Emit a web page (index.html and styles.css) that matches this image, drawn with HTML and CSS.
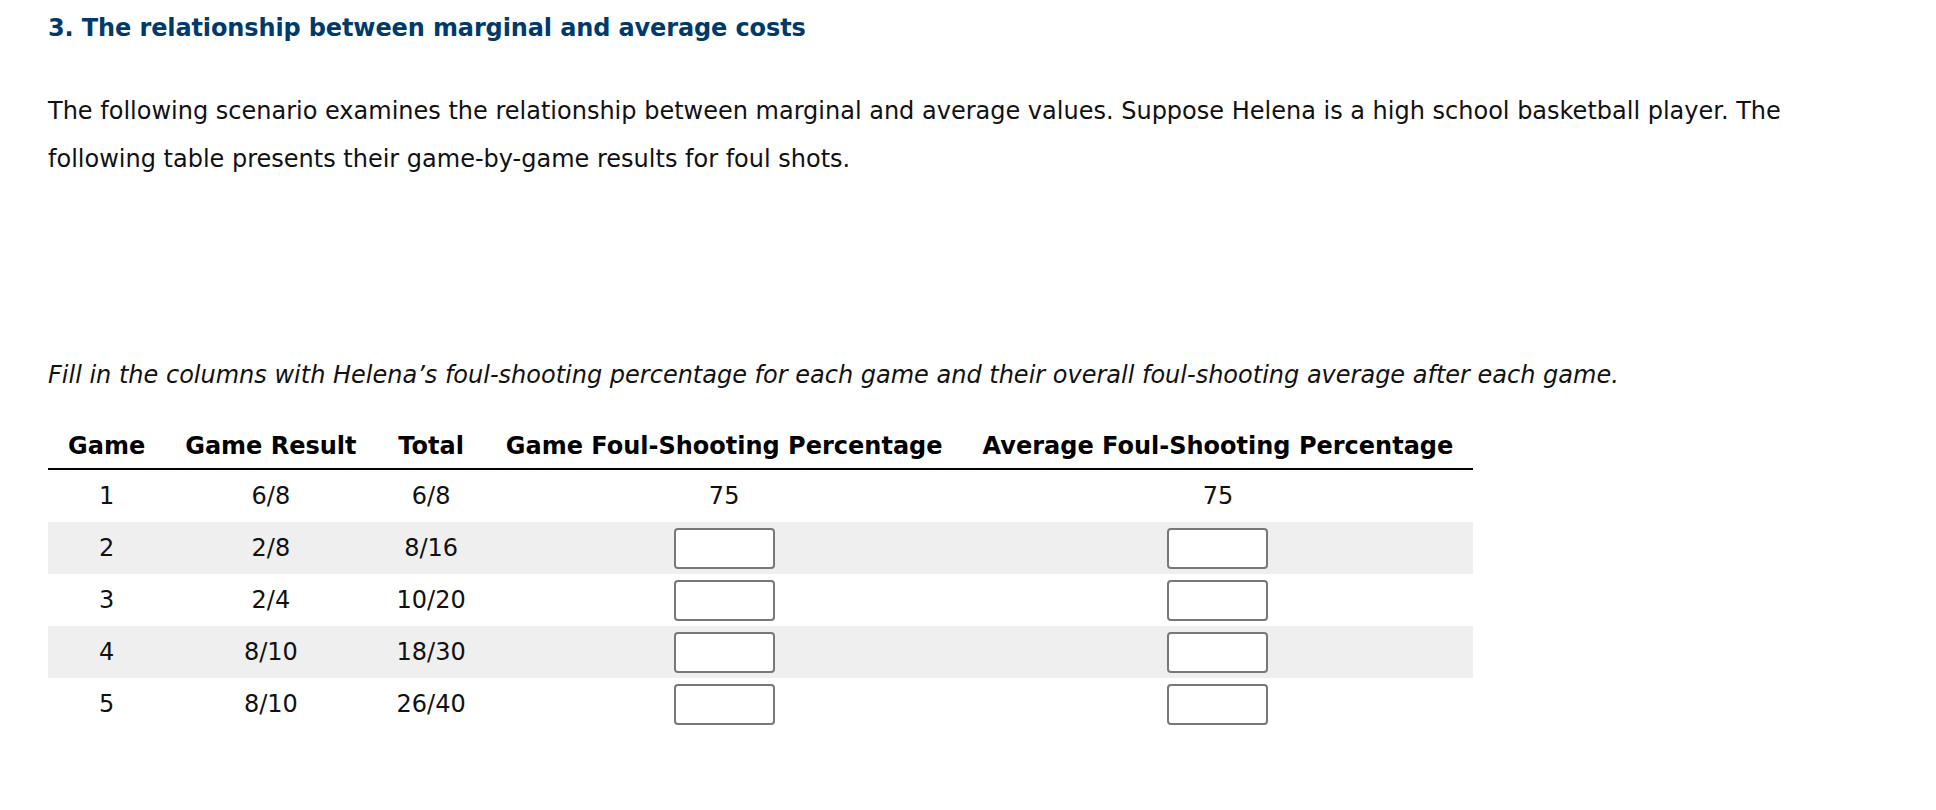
FILE: index.html
```html
<!DOCTYPE html>
<html>
<head>
<meta charset="utf-8">
<link rel="stylesheet" href="styles.css">
</head>
<body>
<div class="page">
  <h2 class="title">3. The relationship between marginal and average costs</h2>
  <p class="intro">The following scenario examines the relationship between marginal and average values. Suppose Helena is a high school basketball player. The following table presents their game-by-game results for foul shots.</p>
  <p class="instr">Fill in the columns with Helena’s foul-shooting percentage for each game and their overall foul-shooting average after each game.</p>
  <table class="results">
    <thead>
      <tr><th>Game</th><th>Game Result</th><th>Total</th><th>Game Foul-Shooting Percentage</th><th>Average Foul-Shooting Percentage</th></tr>
    </thead>
    <tbody>
      <tr><td>1</td><td>6/8</td><td>6/8</td><td>75</td><td>75</td></tr>
      <tr class="alt"><td>2</td><td>2/8</td><td>8/16</td><td><span class="box"></span></td><td><span class="box"></span></td></tr>
      <tr><td>3</td><td>2/4</td><td>10/20</td><td><span class="box"></span></td><td><span class="box"></span></td></tr>
      <tr class="alt"><td>4</td><td>8/10</td><td>18/30</td><td><span class="box"></span></td><td><span class="box"></span></td></tr>
      <tr><td>5</td><td>8/10</td><td>26/40</td><td><span class="box"></span></td><td><span class="box"></span></td></tr>
    </tbody>
  </table>
</div>
</body>
</html>
```

FILE: styles.css
```css
html, body {
  margin: 0;
  padding: 0;
  background: #fff;
}
body {
  font-family: "DejaVu Sans", Verdana, sans-serif;
  color: #111;
  font-size: 24px;
}
.page {
  padding: 12px 48px 0 48px;
}
.title {
  margin: 0;
  font-size: 24px;
  line-height: 32px;
  font-weight: bold;
  letter-spacing: -0.12px;
  color: #003a6b;
}
.intro {
  margin: 43px 0 0 0;
  max-width: 1800px;
  font-size: 24px;
  line-height: 48px;
}
.instr {
  margin: 174px 0 0 0;
  font-size: 24px;
  line-height: 36px;
  font-style: italic;
}
.results {
  margin-top: 38px;
  border-collapse: collapse;
  font-size: 24px;
}
.results th {
  font-weight: bold;
  color: #000;
  padding: 0 20px 7px;
  line-height: 30px;
  border-bottom: 2px solid #000;
  text-align: center;
  vertical-align: bottom;
  white-space: nowrap;
}
.results td {
  height: 52px;
  padding: 0 20px;
  text-align: center;
  vertical-align: middle;
  line-height: 30px;
}
.results tr.alt td {
  background: #efefef;
}
.box {
  display: inline-block;
  vertical-align: middle;
  width: 97px;
  height: 37px;
  border: 2px solid #787878;
  border-radius: 4px;
  background: #fff;
}
```
